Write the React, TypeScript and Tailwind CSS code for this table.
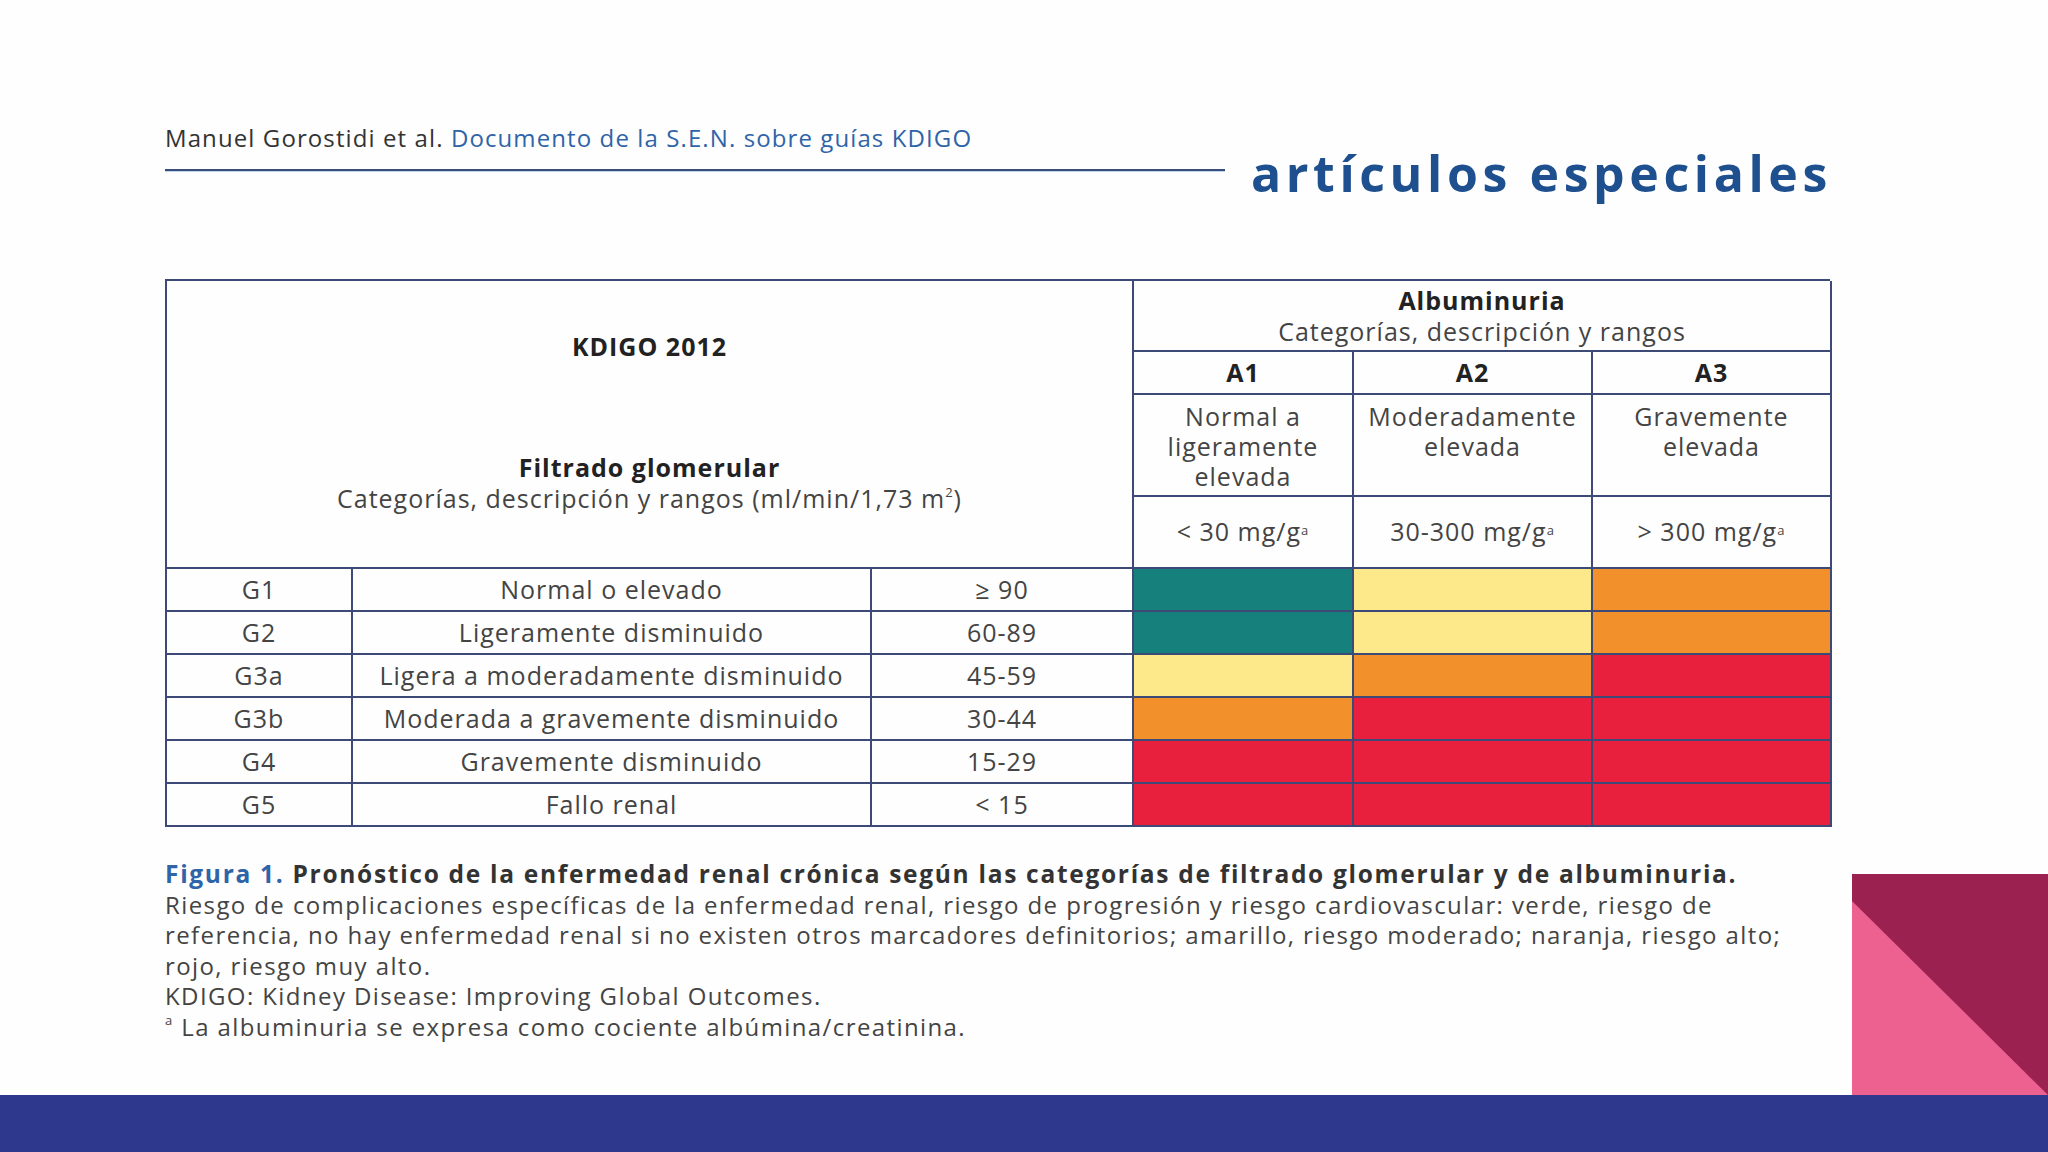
const RISK = {
  green: "bg-[#16807d]",
  yellow: "bg-[#fde88a]",
  orange: "bg-[#f2912b]",
  red: "bg-[#e9203d]",
};

const ROWS = [
  { g: "G1", label: "Normal o elevado", range: "≥ 90", risk: [RISK.green, RISK.yellow, RISK.orange] },
  { g: "G2", label: "Ligeramente disminuido", range: "60-89", risk: [RISK.green, RISK.yellow, RISK.orange] },
  { g: "G3a", label: "Ligera a moderadamente disminuido", range: "45-59", risk: [RISK.yellow, RISK.orange, RISK.red] },
  { g: "G3b", label: "Moderada a gravemente disminuido", range: "30-44", risk: [RISK.orange, RISK.red, RISK.red] },
  { g: "G4", label: "Gravemente disminuido", range: "15-29", risk: [RISK.red, RISK.red, RISK.red] },
  { g: "G5", label: "Fallo renal", range: "< 15", risk: [RISK.red, RISK.red, RISK.red] },
];

const cell = "border-r-2 border-b-2 border-[#3d4a78]";

function Sup({ children }: { children: React.ReactNode }) {
  return <sup className="relative -top-[2px] text-[13px] align-super">{children}</sup>;
}

export default function App() {
  return (
    <div className="flex h-[1152px] w-full flex-col overflow-hidden bg-[#fefefe] font-['Open_Sans',sans-serif]">
      <div className="flex flex-1">
        <main className="w-[1852px] pl-[165px] pr-[20px] pt-[123px]">
          {/* running head */}
          <div className="flex items-start">
            <div className="w-[1060px]">
              <p className="text-[24px] leading-[30px] tracking-[1.1px] text-[#333]">
                Manuel Gorostidi et al.{" "}
                <span className="text-[#2f64a8]">Documento de la S.E.N. sobre guías KDIGO</span>
              </p>
              <div className="mt-[16px] h-[3px] border-b border-[#bfd3ea] bg-[#3a4f78]" />
            </div>
            <h1 className="ml-[26px] mt-[20px] text-[50px] font-bold leading-[60px] tracking-[4.6px] text-[#1e4f8f]">
              artículos especiales
            </h1>
          </div>

          {/* KDIGO table */}
          <div className="mt-[76px] grid w-[1665px] grid-cols-[186px_519px_262px_220px_239px_239px] grid-rows-[71px_43px_102px_72px_repeat(6,43px)] border-t-2 border-l-2 border-[#3d4a78] text-[25px] tracking-[1px] text-[#444]">
            <div className={`${cell} col-span-3 row-span-4 flex flex-col items-center justify-between pt-[50px] pb-[53px] leading-[31px]`}>
              <span className="font-bold text-[#222]">KDIGO 2012</span>
              <div className="flex flex-col items-center">
                <span className="font-bold text-[#222]">Filtrado glomerular</span>
                <span>
                  Categorías, descripción y rangos (ml/min/1,73 m<Sup>2</Sup>)
                </span>
              </div>
            </div>
            <div className={`${cell} col-span-3 flex flex-col items-center justify-center leading-[31px]`}>
              <span className="font-bold text-[#222]">Albuminuria</span>
              <span>Categorías, descripción y rangos</span>
            </div>
            {["A1", "A2", "A3"].map((a) => (
              <div key={a} className={`${cell} flex items-center justify-center font-bold text-[#222]`}>
                {a}
              </div>
            ))}
            <div className={`${cell} pt-[6px] text-center leading-[30px]`}>
              Normal a<br />ligeramente<br />elevada
            </div>
            <div className={`${cell} pt-[6px] text-center leading-[30px]`}>
              Moderadamente<br />elevada
            </div>
            <div className={`${cell} pt-[6px] text-center leading-[30px]`}>
              Gravemente<br />elevada
            </div>
            <div className={`${cell} flex items-center justify-center`}>
              &lt; 30 mg/g<Sup>a</Sup>
            </div>
            <div className={`${cell} flex items-center justify-center`}>
              30-300 mg/g<Sup>a</Sup>
            </div>
            <div className={`${cell} flex items-center justify-center`}>
              &gt; 300 mg/g<Sup>a</Sup>
            </div>
            {ROWS.map((r) => (
              <div key={r.g} className="contents">
                <div className={`${cell} flex items-center justify-center`}>{r.g}</div>
                <div className={`${cell} flex items-center justify-center`}>{r.label}</div>
                <div className={`${cell} flex items-center justify-center`}>{r.range}</div>
                {r.risk.map((c, i) => (
                  <div key={i} className={`${cell} ${c}`} />
                ))}
              </div>
            ))}
          </div>

          {/* caption */}
          <div className="mt-[32px] whitespace-nowrap text-[24px] leading-[30.5px] tracking-[1.4px] text-[#444]">
            <p className="text-[24.5px] font-bold tracking-[1.7px] text-[#333]">
              <span className="text-[#2f64a8]">Figura 1.</span> Pronóstico de la enfermedad renal crónica según las
              categorías de filtrado glomerular y de albuminuria.
            </p>
            <p>
              Riesgo de complicaciones específicas de la enfermedad renal, riesgo de progresión y riesgo cardiovascular: verde, riesgo de
            </p>
            <p>
              referencia, no hay enfermedad renal si no existen otros marcadores definitorios; amarillo, riesgo moderado; naranja, riesgo alto;
            </p>
            <p>rojo, riesgo muy alto.</p>
            <p>KDIGO: Kidney Disease: Improving Global Outcomes.</p>
            <p>
              <Sup>a</Sup> La albuminuria se expresa como cociente albúmina/creatinina.
            </p>
          </div>
        </main>

        {/* corner decoration */}
        <aside className="flex w-[196px] flex-col justify-end">
          <svg width="196" height="221" viewBox="0 0 196 221" className="block">
            <rect width="196" height="221" fill="#9b2150" />
            <polygon points="0,27 0,221 196,221" fill="#ed6190" />
          </svg>
        </aside>
      </div>
      <div className="h-[57px] bg-[#2e398d]" />
    </div>
  );
}
